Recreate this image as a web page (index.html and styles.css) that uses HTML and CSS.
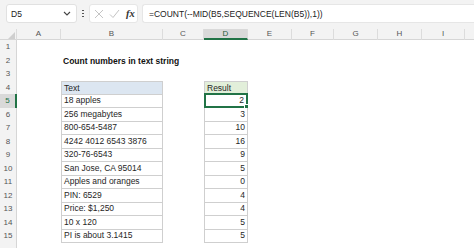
FILE: index.html
```html
<!DOCTYPE html>
<html>
<head>
<meta charset="utf-8">
<link rel="stylesheet" href="styles.css">
</head>
<body>
<div class="toolbar">
  <div class="namebox"><span>D5</span>
    <svg class="chev" width="8" height="5" viewBox="0 0 8 5"><path d="M1 1 L4 4 L7 1" fill="none" stroke="#444" stroke-width="1.1"/></svg>
  </div>
  <div class="dots"><i></i><i></i><i></i></div>
  <div class="fxbox">
    <svg width="10" height="10" viewBox="0 0 10 10"><path d="M1 1 L9 9 M9 1 L1 9" stroke="#c4c4c4" stroke-width="1"/></svg>
    <svg width="11" height="10" viewBox="0 0 11 10"><path d="M1 5.5 L4 8.5 L10 1" fill="none" stroke="#c4c4c4" stroke-width="1"/></svg>
    <span class="fx">fx</span>
  </div>
  <div class="formula">=COUNT(--MID(B5,SEQUENCE(LEN(B5)),1))</div>
</div>
<div class="sheet">
  <div class="row head">
    <div class="corner"><svg width="7" height="7" viewBox="0 0 7 7"><path d="M7 0 L7 7 L0 7 Z" fill="#cfcfcf"/></svg></div>
    <div class="ch">A</div><div class="ch">B</div><div class="ch">C</div><div class="ch sel">D</div><div class="ch">E</div><div class="ch">F</div><div class="ch">G</div><div class="ch">H</div><div class="ch">I</div><div class="ch last"></div>
  </div>
  <div class="row"><div class="rn">1</div></div>
  <div class="row"><div class="rn">2</div><div class="c b title">Count numbers in text string</div></div>
  <div class="row"><div class="rn">3</div></div>
  <div class="row"><div class="rn">4</div><div class="c b t th">Text</div><div class="c d t thr">Result</div></div>
  <div class="row"><div class="rn rsel">5</div><div class="c b t">18 apples</div><div class="c d t num active">2<span class="handle"></span></div></div>
  <div class="row"><div class="rn">6</div><div class="c b t">256 megabytes</div><div class="c d t num">3</div></div>
  <div class="row"><div class="rn">7</div><div class="c b t">800-654-5487</div><div class="c d t num">10</div></div>
  <div class="row"><div class="rn">8</div><div class="c b t">4242 4012 6543 3876</div><div class="c d t num">16</div></div>
  <div class="row"><div class="rn">9</div><div class="c b t">320-76-6543</div><div class="c d t num">9</div></div>
  <div class="row"><div class="rn">10</div><div class="c b t">San Jose, CA 95014</div><div class="c d t num">5</div></div>
  <div class="row"><div class="rn">11</div><div class="c b t">Apples and oranges</div><div class="c d t num">0</div></div>
  <div class="row"><div class="rn">12</div><div class="c b t">PIN: 6529</div><div class="c d t num">4</div></div>
  <div class="row"><div class="rn">13</div><div class="c b t">Price: $1,250</div><div class="c d t num">4</div></div>
  <div class="row"><div class="rn">14</div><div class="c b t">10 x 120</div><div class="c d t num">5</div></div>
  <div class="row"><div class="rn">15</div><div class="c b t">PI is about 3.1415</div><div class="c d t num">5</div></div>
  <div class="row"><div class="rn"></div></div>
</div>
</body>
</html>
```
FILE: styles.css
```css
html, body {
  margin: 0;
  padding: 0;
}
body {
  width: 474px;
  height: 248px;
  overflow: hidden;
  background: #fff;
  color: #262626;
  font-family: "Liberation Sans", Arial, sans-serif;
  font-size: 8.5px;
}
.toolbar {
  height: 29px;
  background: #f3f3f3;
  display: flex;
  align-items: flex-start;
  padding-top: 4px;
  box-sizing: border-box;
}
.namebox {
  margin-left: 6px;
  width: 71px;
  height: 19px;
  background: #fff;
  border: 1px solid #e1e1e1;
  border-radius: 3px;
  box-sizing: border-box;
  display: flex;
  align-items: center;
  justify-content: space-between;
  padding: 0 5px 0 4px;
  color: #222;
}
.dots {
  width: 12px;
  height: 19px;
  display: flex;
  flex-direction: column;
  align-items: center;
  justify-content: center;
  gap: 1.5px;
}
.dots i {
  display: block;
  width: 1.5px;
  height: 1.5px;
  background: #555;
}
.fxbox {
  width: 49px;
  height: 19px;
  background: #fff;
  border: 1px solid #e6e6e6;
  border-radius: 3px;
  box-sizing: border-box;
  display: flex;
  align-items: center;
  padding-left: 4px;
  gap: 5px;
}
.fx {
  font-family: "Liberation Serif", "Times New Roman", serif;
  font-style: italic;
  font-weight: bold;
  font-size: 10.5px;
  color: #333;
  margin-left: 1px;
}
.formula {
  margin-left: 4px;
  flex: 1;
  height: 19px;
  background: #fff;
  border: 1px solid #e6e6e6;
  border-right: 0;
  border-radius: 3px 0 0 3px;
  box-sizing: border-box;
  display: flex;
  align-items: center;
  padding-left: 6px;
  color: #222;
}
.sheet {
  display: flex;
  flex-direction: column;
}
.row {
  display: grid;
  grid-template-columns: 17px 44px 102px 41px 44px 44px 42px 44px 44px 43px 9px;
  height: 13.5px;
}
.row.head {
  height: 11px;
  background: #f3f3f3;
  border-bottom: 1px solid #d6d6d6;
  box-sizing: border-box;
}
.corner {
  display: flex;
  align-items: flex-end;
  justify-content: flex-end;
  padding: 0 1px 1px 0;
  border-right: 1px solid #dcdcdc;
}
.ch {
  font-size: 8px;
  color: #555;
  text-align: center;
  line-height: 10px;
  border-right: 1px solid #dcdcdc;
}
.ch.last {
  border-right: 0;
}
.ch.sel {
  background: #d9d9d9;
  border-bottom: 2px solid #217346;
  color: #1e5c38;
  line-height: 9px;
}
.rn {
  grid-column: 1;
  background: #f3f3f3;
  border-right: 1px solid #d6d6d6;
  font-size: 8px;
  color: #555;
  text-align: center;
  line-height: 13.5px;
}
.rn.rsel {
  background: #d9d9d9;
  color: #217346;
  border-right: 2px solid #217346;
}
.c {
  line-height: 13px;
  white-space: nowrap;
  padding-left: 2px;
  box-sizing: border-box;
  position: relative;
}
.b {
  grid-column: 3;
}
.d {
  grid-column: 5;
}
.title {
  font-weight: bold;
  color: #111;
  line-height: 15px;
}
.t {
  border-left: 1px solid #cfcfcf;
  border-right: 1px solid #cfcfcf;
  border-bottom: 1px solid #cfcfcf;
}
.th {
  background: #dce6f1;
  border-top: 1px solid #cfcfcf;
  line-height: 12px;
}
.thr {
  background: #e2efda;
  border-top: 1px solid #cfcfcf;
  line-height: 12px;
}
.num {
  text-align: right;
  padding-right: 2px;
}
.active {
  border: 2px solid #217346;
  margin-top: -1px;
  line-height: 11px;
  height: 14.5px;
}
.handle {
  position: absolute;
  right: -3px;
  bottom: -3px;
  background: #217346;
  border: 1px solid #fff;
  box-sizing: content-box;
  width: 3px;
  height: 3px;
}
```
